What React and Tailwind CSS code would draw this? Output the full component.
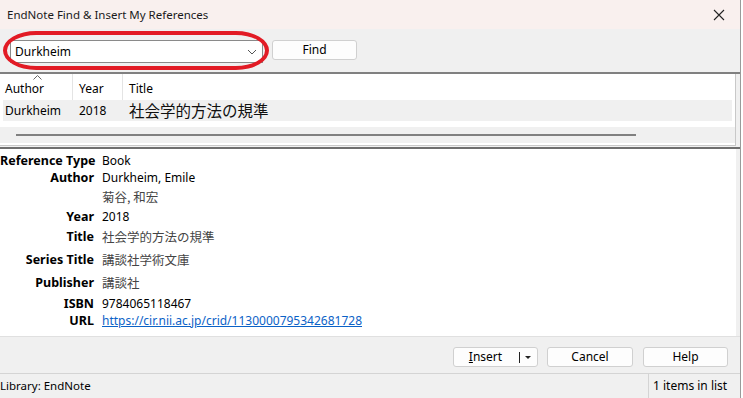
import React from "react";

const ui = { fontFamily: '"Noto Sans", "Noto Sans CJK JP", sans-serif' };
const cjk = { fontFamily: '"Noto Sans CJK JP", "Noto Sans", sans-serif' };

function Row({ label, children, className = "" }) {
  return (
    <div className={`flex items-center h-[17px] whitespace-nowrap ${className}`}>
      <div className="w-[102px] shrink-0 text-right font-bold text-[12.5px] text-black pr-[8px]">{label}</div>
      <div className="text-black">{children}</div>
    </div>
  );
}

function Jp({ children }) {
  return <span className="text-[#444] text-[12.5px] leading-[17px]" style={cjk}>{children}</span>;
}

export default function App() {
  return (
    <div className="w-[743px] h-[398px] bg-white flex text-[12px] overflow-hidden" style={ui}>
      <div className="w-[741px] h-full flex flex-col border-r border-[#9a9a9a] bg-[#f0f0f0]">
        {/* title bar */}
        <div className="h-[29px] shrink-0 bg-[#f9f0ee] flex items-center justify-between pl-[7px] pr-[12px]">
          <span className="text-[11.5px] text-[#1a1a1a]">EndNote Find &amp; Insert My References</span>
          <svg width="12" height="12" viewBox="0 0 12 12" className="mr-[3px]">
            <path d="M1 1 L11 11 M11 1 L1 11" stroke="#222" strokeWidth="1.1" />
          </svg>
        </div>

        {/* toolbar */}
        <div className="h-[45px] shrink-0 flex items-center pl-[10px] border-b-2 border-[#808080]">
          <div className="relative mt-[2px]">
            <div className="absolute -left-[7px] -top-[9px] w-[266px] h-[39px] rounded-[34px/20px] border-[4px] border-[#e21b25]" />
            <div className="w-[253px] h-[23px] bg-white border border-[#8a8a8a] flex items-center justify-between px-[4px]">
              <span className="text-black">Durkheim</span>
              <svg width="10" height="6" viewBox="0 0 10 6" className="mr-[1px]">
                <path d="M1 1 L5 5 L9 1" fill="none" stroke="#555" strokeWidth="1" />
              </svg>
            </div>
          </div>
          <button className="ml-[9px] -mt-[2px] w-[85px] h-[20px] bg-[#fdfdfd] border border-[#d0d0d0] rounded-[3px] text-black leading-none">
            Find
          </button>
        </div>

        {/* list */}
        <div className="h-[72px] shrink-0 bg-white flex flex-col border-b border-[#c8c8c8] mr-[4px] border-r">
          <div className="h-[26px] flex relative">
            <svg width="9" height="5" viewBox="0 0 9 5" className="absolute left-[33px] top-[1px]">
              <path d="M0.5 4.5 L4.5 0.5 L8.5 4.5" fill="none" stroke="#666" strokeWidth="1" />
            </svg>
            <div className="w-[73px] pl-[5px] border-r border-[#e4e4e4] flex items-center pt-[3px]">Author</div>
            <div className="w-[50px] pl-[6px] border-r border-[#e4e4e4] flex items-center pt-[3px]">Year</div>
            <div className="pl-[6px] flex items-center pt-[3px]">Title</div>
          </div>
          <div className="h-[21px] bg-[#f0f0f0] flex items-center mx-[3px]">
            <div className="w-[70px] pl-[2px]">Durkheim</div>
            <div className="w-[50px] pl-[6px]">2018</div>
            <div className="pl-[6px] text-[15.5px] text-[#111]" style={cjk}>社会学的方法の規準</div>
          </div>
          <div className="h-[6px]" />
          <div className="h-[16px] bg-[#f0f0f0] flex items-center">
            <div className="ml-[16px] w-[620px] h-[2px] bg-[#808080]" />
          </div>
        </div>
        <div className="h-[3px] shrink-0 bg-[#f0f0f0] border-b-2 border-[#6e6e6e]" />

        {/* details */}
        <div className="h-[187px] shrink-0 bg-white pt-[3px] leading-[17px] text-[12px] mr-[4px]">
          <Row label="Reference Type">Book</Row>
          <Row label="Author">Durkheim, Emile</Row>
          <Row label="" className="mt-[2px]"><Jp>菊谷, 和宏</Jp></Row>
          <Row label="Year" className="mt-[3px]">2018</Row>
          <Row label="Title" className="mt-[3px]"><Jp>社会学的方法の規準</Jp></Row>
          <Row label="Series Title" className="mt-[6px]"><Jp>講談社学術文庫</Jp></Row>
          <Row label="Publisher" className="mt-[6px]"><Jp>講談社</Jp></Row>
          <Row label="ISBN" className="mt-[4px]">9784065118467</Row>
          <Row label="URL"><span className="text-[#0b62c7] underline">https://cir.nii.ac.jp/crid/1130000795342681728</span></Row>
        </div>

        {/* buttons */}
        <div className="h-[38px] shrink-0 border-t border-[#e0e0e0] border-b border-b-[#d4d4d4] flex items-center justify-end pr-[12px] pt-[4px] gap-[9px]">
          <button className="w-[85px] h-[20px] bg-[#fdfdfd] border border-[#d0d0d0] rounded-[3px] flex items-center justify-center relative">
            <span className="ml-[-20px]"><span className="underline">I</span>nsert</span>
            <span className="absolute left-[65px] top-[4px] w-[1px] h-[11px] bg-[#222]" />
            <svg width="6" height="4" viewBox="0 0 6 4" className="absolute left-[71px] top-[8px]">
              <path d="M0 0 L6 0 L3 3 Z" fill="#222" />
            </svg>
          </button>
          <button className="w-[86px] h-[20px] bg-[#fdfdfd] border border-[#d0d0d0] rounded-[3px]">Cancel</button>
          <button className="ml-[1px] w-[85px] h-[20px] bg-[#fdfdfd] border border-[#d0d0d0] rounded-[3px]">Help</button>
        </div>

        {/* status */}
        <div className="flex-1 flex items-center">
          <div className="flex-1 text-[11.5px]">Library: EndNote</div>
          <div className="w-[92px] h-full border-l border-[#d4d4d4] pl-[4px] flex items-center">1 items in list</div>
        </div>
      </div>
    </div>
  );
}
